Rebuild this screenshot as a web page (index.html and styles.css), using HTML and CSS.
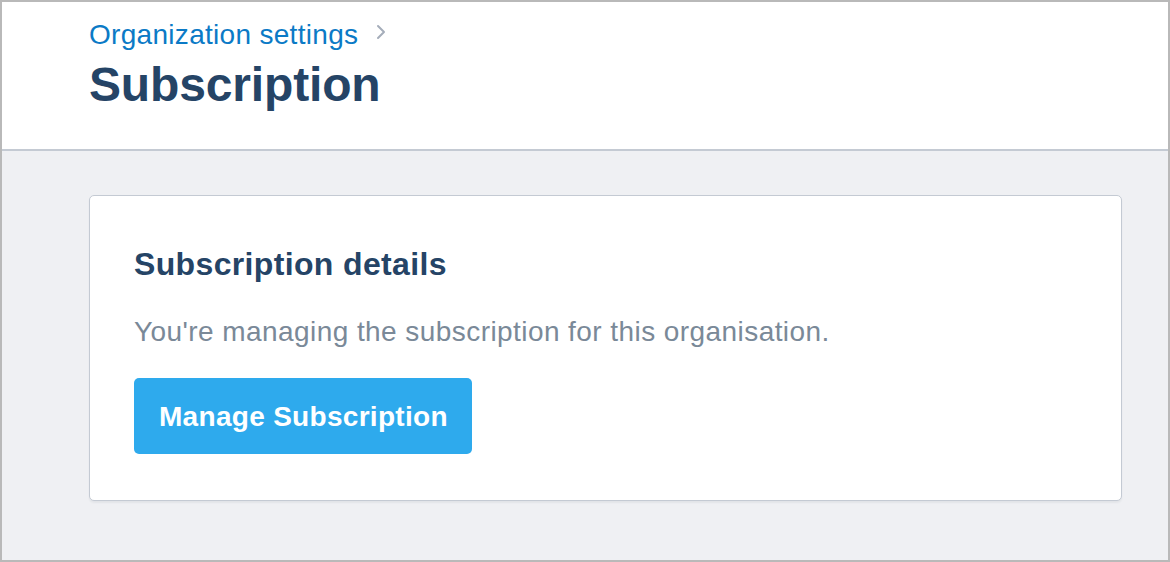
FILE: index.html
```html
<!DOCTYPE html>
<html lang="en">
<head>
<meta charset="utf-8">
<title>Subscription</title>
<link rel="stylesheet" href="styles.css">
</head>
<body>
<div class="frame">
  <header class="page-header">
    <nav class="breadcrumb">
      <a class="crumb-link" href="#">Organization settings</a>
      <svg class="chevron" width="10" height="16" viewBox="0 0 10 16" aria-hidden="true"><polyline points="2,2 8,8 2,14" fill="none" stroke="#a5adba" stroke-width="2" stroke-linecap="round" stroke-linejoin="round"/></svg>
    </nav>
    <h1 class="page-title">Subscription</h1>
  </header>
  <main class="content">
    <section class="card">
      <h2 class="card-title">Subscription details</h2>
      <p class="card-text">You're managing the subscription for this organisation.</p>
      <button class="btn-primary" type="button">Manage Subscription</button>
    </section>
  </main>
</div>
</body>
</html>
```
FILE: styles.css
```css
* { box-sizing: border-box; }
html, body { margin: 0; padding: 0; }
body {
  font-family: "Liberation Sans", Arial, Helvetica, sans-serif;
  background: #eff0f3;
}
.frame {
  width: 1170px;
  height: 562px;
  border: 2px solid #b9b9b9;
  background: #eff0f3;
  display: flex;
  flex-direction: column;
  overflow: hidden;
}
.page-header {
  background: #ffffff;
  height: 149px;
  border-bottom: 2px solid #c4cad3;
  padding: 15px 0 0 87px;
}
.breadcrumb {
  display: flex;
  align-items: center;
  height: 36px;
}
.crumb-link {
  font-size: 28px;
  line-height: 36px;
  letter-spacing: 0.3px;
  color: #0b7ac6;
  text-decoration: none;
}
.chevron {
  margin-left: 18px;
  margin-top: -6px;
}
.page-title {
  margin: 4px 0 0 0;
  font-size: 48px;
  line-height: 56px;
  font-weight: 700;
  color: #254466;
  letter-spacing: -0.15px;
}
.content {
  padding: 44px 46px 0 87px;
}
.card {
  background: #ffffff;
  border: 1px solid #c4cad3;
  border-radius: 5px;
  box-shadow: 0 2px 2px rgba(40, 50, 70, 0.06);
  height: 306px;
  padding: 48px 44px 45px 44px;
}
.card-title {
  margin: 0;
  font-size: 32px;
  line-height: 40px;
  font-weight: 700;
  color: #254466;
  letter-spacing: 0.35px;
}
.card-text {
  margin: 30px 0 0 0;
  font-size: 28px;
  line-height: 36px;
  color: #7a8998;
  letter-spacing: 0.43px;
}
.btn-primary {
  margin-top: 28px;
  display: block;
  height: 76px;
  padding: 2px 24px 0 25px;
  border: none;
  border-radius: 5px;
  background: #2eaaed;
  color: #ffffff;
  font-family: "Liberation Sans", Arial, Helvetica, sans-serif;
  font-size: 28px;
  line-height: 74px;
  font-weight: 700;
  letter-spacing: 0.3px;
  cursor: pointer;
}
```
